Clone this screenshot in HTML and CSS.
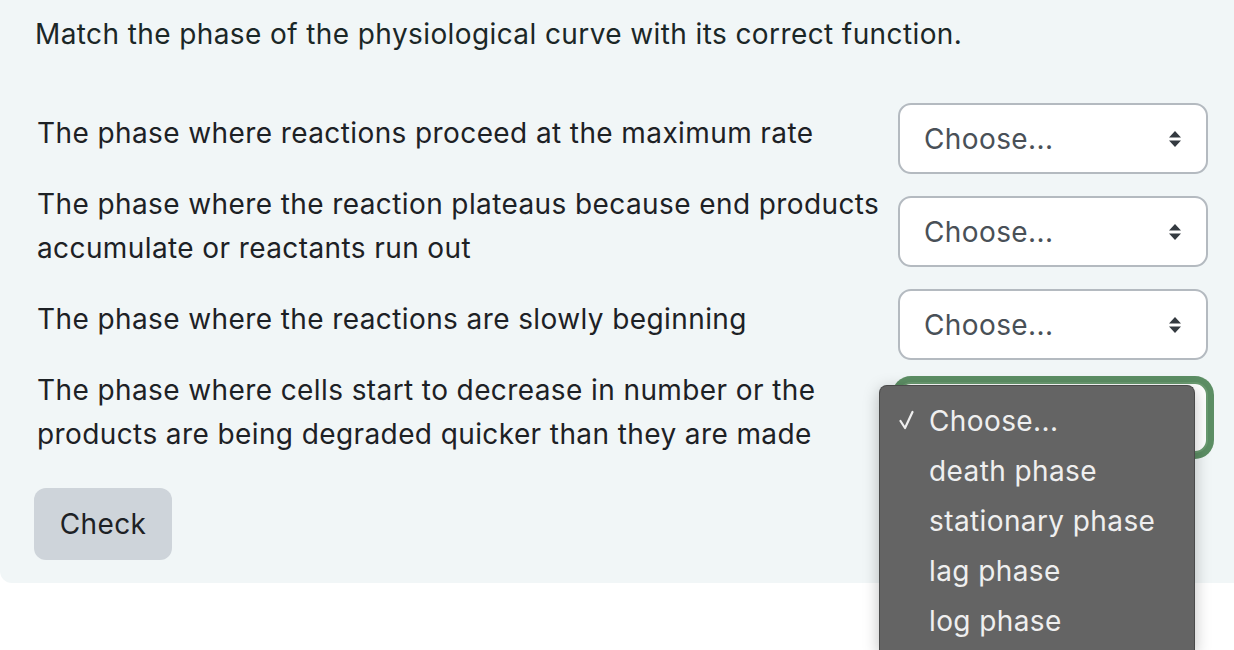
FILE: index.html
```html
<!doctype html>
<html lang="en">
<head>
    <meta charset="UTF-8">
    <title>Match question</title>
    <link rel="stylesheet" href="styles.css">
</head>
<body>
<div class="formulation">
    <div class="qtext">Match the phase of the physiological curve with its correct function.</div>

    <div class="answer">
        <div class="row">
            <div class="text">The phase where reactions proceed at the maximum rate</div>
            <div class="control">
                <div class="select"><span>Choose...</span>
                    <svg class="arrows" width="14" height="18" viewBox="0 0 14 18"><path d="M7 1 L13 7.5 L1 7.5 Z M7 17 L13 10.5 L1 10.5 Z" fill="#343a40"/></svg>
                </div>
            </div>
        </div>
        <div class="row">
            <div class="text">The phase where the reaction plateaus because end products accumulate or reactants run out</div>
            <div class="control">
                <div class="select"><span>Choose...</span>
                    <svg class="arrows" width="14" height="18" viewBox="0 0 14 18"><path d="M7 1 L13 7.5 L1 7.5 Z M7 17 L13 10.5 L1 10.5 Z" fill="#343a40"/></svg>
                </div>
            </div>
        </div>
        <div class="row">
            <div class="text">The phase where the reactions are slowly beginning</div>
            <div class="control">
                <div class="select"><span>Choose...</span>
                    <svg class="arrows" width="14" height="18" viewBox="0 0 14 18"><path d="M7 1 L13 7.5 L1 7.5 Z M7 17 L13 10.5 L1 10.5 Z" fill="#343a40"/></svg>
                </div>
            </div>
        </div>
        <div class="row">
            <div class="text">The phase where cells start to decrease in number or the products are being degraded quicker than they are made</div>
            <div class="control">
                <div class="select focused"><span>Choose...</span>
                    <svg class="arrows" width="14" height="18" viewBox="0 0 14 18"><path d="M7 1 L13 7.5 L1 7.5 Z M7 17 L13 10.5 L1 10.5 Z" fill="#343a40"/></svg>
                </div>
                <!-- open menu of the focused select -->
                <ul class="menu">
                    <li class="selected">
                        <svg class="tick" width="15" height="20" viewBox="0 0 15 20"><path d="M1.5 11 L6 18 L13.5 2" fill="none" stroke="#efefef" stroke-width="2.2" stroke-linecap="round" stroke-linejoin="round"/></svg>Choose...
                    </li>
                    <li>death phase</li>
                    <li>stationary phase</li>
                    <li>lag phase</li>
                    <li>log phase</li>
                </ul>
            </div>
        </div>
    </div>

    <button class="check" type="button">Check</button>
</div>
</body>
</html>
```

FILE: styles.css
```css
html, body {
    margin: 0;
    padding: 0;
    background: #ffffff;
    font-family: Inter, "Liberation Sans", sans-serif;
    color: #1d2125;
    letter-spacing: 0.4px;
}

body {
    min-height: 650px;
}

.formulation {
    background: #f1f6f7;
    border-bottom-left-radius: 12px;
    padding: 14px 0 24px 35px;
    height: 545px;
}

.qtext {
    font-size: 28px;
    line-height: 40px;
    color: #1b2727;
}

.answer {
    margin-top: 49px;
}

.row {
    display: flex;
    align-items: center;
    margin-bottom: 8px;
}

.text {
    width: 855px;
    padding-left: 2px;
    font-size: 28px;
    line-height: 44px;
    margin-bottom: 11px;
}

.control {
    position: relative;
    margin-left: 6px;
}

.select {
    box-sizing: border-box;
    width: 310px;
    height: 71px;
    background: #ffffff;
    border: 2px solid #b4bac0;
    border-radius: 13px;
    display: flex;
    align-items: center;
    justify-content: space-between;
    padding: 0 24px 0 24px;
    font-size: 28px;
    color: #495057;
}

.select.focused {
    border-color: #6a9a70;
    box-shadow: 0 0 0 6px #5c8e64;
}

/* the open menu covers the label of the focused select */
.select.focused span {
    visibility: hidden;
}

.arrows {
    display: block;
}

.menu {
    position: absolute;
    left: -19px;
    top: 3px;
    width: 316px;
    height: 266px;
    margin: 0;
    padding: 10px 0 0 0;
    box-sizing: border-box;
    list-style: none;
    background: #646464;
    border: 1px solid #4a4a4a;
    border-bottom: none;
    border-radius: 8px 8px 0 0;
    box-shadow: 0 4px 16px rgba(0, 0, 0, 0.25);
}

.menu li {
    height: 50px;
    line-height: 50px;
    padding-left: 49px;
    font-size: 28px;
    color: #efefef;
    position: relative;
}

.menu .tick {
    position: absolute;
    left: 19px;
    top: 14px;
}

.check {
    margin-top: 13px;
    width: 138px;
    height: 72px;
    border: none;
    border-radius: 12px;
    background: #ced4da;
    color: #1d2125;
    font-family: Inter, "Liberation Sans", sans-serif;
    font-size: 28px;
    letter-spacing: 0.4px;
    margin-left: -1px;
}
```
